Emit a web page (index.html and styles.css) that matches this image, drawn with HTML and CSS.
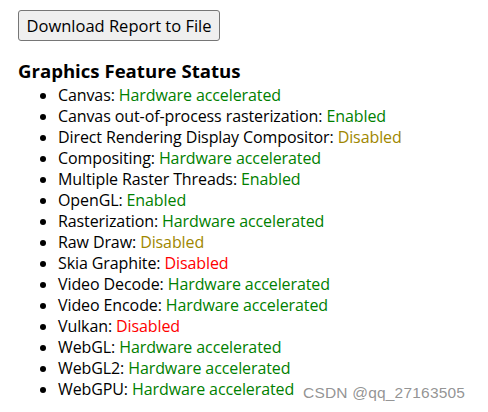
FILE: index.html
```html
<!DOCTYPE html>
<html>
<head>
<meta charset="utf-8">
<link rel="stylesheet" href="styles.css">
</head>
<body>
<div class="page">
  <button class="download">Download Report to File</button>
  <h3 class="title">Graphics Feature Status</h3>
  <ul class="features">
    <li>Canvas: <span class="green">Hardware accelerated</span></li>
    <li>Canvas out-of-process rasterization: <span class="green">Enabled</span></li>
    <li>Direct Rendering Display Compositor: <span class="yellow">Disabled</span></li>
    <li>Compositing: <span class="green">Hardware accelerated</span></li>
    <li>Multiple Raster Threads: <span class="green">Enabled</span></li>
    <li>OpenGL: <span class="green">Enabled</span></li>
    <li>Rasterization: <span class="green">Hardware accelerated</span></li>
    <li>Raw Draw: <span class="yellow">Disabled</span></li>
    <li>Skia Graphite: <span class="red">Disabled</span></li>
    <li>Video Decode: <span class="green">Hardware accelerated</span></li>
    <li>Video Encode: <span class="green">Hardware accelerated</span></li>
    <li>Vulkan: <span class="red">Disabled</span></li>
    <li>WebGL: <span class="green">Hardware accelerated</span></li>
    <li>WebGL2: <span class="green">Hardware accelerated</span></li>
    <li>WebGPU: <span class="green">Hardware accelerated</span></li>
  </ul>
</div>
<div class="watermark">CSDN @qq_27163505</div>
</body>
</html>
```
FILE: styles.css
```css
html, body {
  margin: 0;
  padding: 0;
  background: #ffffff;
}
body {
  font-family: "Open Sans", "Noto Sans", sans-serif;
  font-size: 16px;
  letter-spacing: -0.1px;
  color: #000;
  position: relative;
  width: 488px;
  height: 412px;
  overflow: hidden;
}
.page {
  padding: 10px 0 0 18px;
}
.download {
  font-family: "Open Sans", "Noto Sans", sans-serif;
  font-size: 16.5px;
  letter-spacing: 0;
  height: 31px;
  width: 202px;
  padding: 0;
  background: #efefef;
  border: 1px solid #767676;
  border-radius: 3px;
  color: #000;
}
.title {
  font-size: 18.6px;
  font-weight: 700;
  letter-spacing: 0;
  margin: 18px 0 0 0;
  line-height: 24px;
}
.features {
  margin: 2px 0 0 0;
  padding-left: 40px;
  line-height: 21px;
}
.green { color: rgb(0, 128, 0); }
.yellow { color: rgb(160, 135, 0); }
.red { color: rgb(255, 0, 0); }
.watermark {
  position: absolute;
  left: 303px;
  top: 384px;
  font-family: "Liberation Sans", Arial, sans-serif;
  font-size: 15.5px;
  color: rgba(120, 120, 120, 0.8);
  letter-spacing: 0.2px;
}
```
